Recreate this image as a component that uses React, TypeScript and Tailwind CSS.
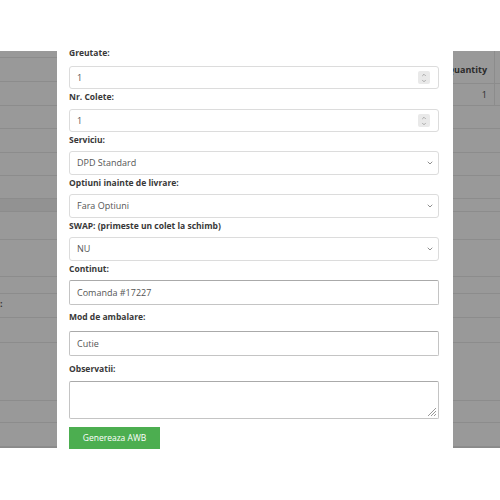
import { ChevronDown, ChevronUp } from 'lucide-react'

const leftRows = [7, 24, 24, 23, 24, 23, 23, 13, 28, 37, 17, 24, 25, 58, 22, 24]
const rightRows = [33, 22, 23, 24, 23, 23, 13, 28, 37, 17, 24, 25, 58, 22, 24]

function Label({ text, className = '' }: { text: string; className?: string }) {
  return (
    <div className={`h-[16px] text-[8.5px] leading-[16px] font-bold text-[#383838] ${className}`}>
      {text}
    </div>
  )
}

function NumberInput({ value, className = '' }: { value: string; className?: string }) {
  return (
    <div
      className={`h-[23px] flex items-center justify-between pl-[7px] pr-[8px] bg-white border border-[#dcdcdc] rounded-[3px] text-[9px] text-[#555] ${className}`}
    >
      <span>{value}</span>
      <span className="w-[12px] h-[13px] bg-[#e9e9e9] rounded-[2px] flex flex-col items-center justify-center text-[#777]">
        <ChevronUp size={6} strokeWidth={2.2} />
        <ChevronDown size={6} strokeWidth={2.2} />
      </span>
    </div>
  )
}

function SelectBox({ value, className = '' }: { value: string; className?: string }) {
  return (
    <div
      className={`h-[24px] flex items-center justify-between pl-[7px] pr-[4px] bg-white border border-[#dcdcdc] rounded-[3px] text-[9px] text-[#555] ${className}`}
    >
      <span>{value}</span>
      <ChevronDown size={8} strokeWidth={2} className="text-[#555]" />
    </div>
  )
}

function TextInput({ value, className = '' }: { value: string; className?: string }) {
  return (
    <div
      className={`h-[25px] flex items-center pl-[7px] bg-white border border-[#c4c4c4] border-t-[#aaa] rounded-[2px] text-[9px] text-[#555] ${className}`}
    >
      {value}
    </div>
  )
}

export default function App() {
  return (
    <div
      className="relative w-[500px] h-[500px] bg-white overflow-hidden"
      style={{ fontFamily: '"Open Sans", "Liberation Sans", sans-serif' }}
    >
      <div className="h-[51px]" />
      {/* dimmed table behind the modal */}
      <div className="h-[397px] bg-[#999] flex border-b border-[#8a8a8a]">
        <div className="w-[57px] flex flex-col">
          {leftRows.map((h, i) => (
            <div
              key={i}
              className={`border-b border-[#8c8c8c] text-[9px] text-[#333] ${i === 7 ? 'bg-[#929292]' : ''}`}
              style={{ height: h }}
            >
              {i === 11 && <span className="block mt-[3px] font-bold leading-[14px]">:</span>}
            </div>
          ))}
        </div>
        <div className="flex-1" />
        <div className="w-[47px] flex flex-col">
          {rightRows.map((h, i) => (
            <div key={i} className="border-b border-[#8c8c8c] flex" style={{ height: h }}>
              <div
                className={`w-[42px] flex items-center justify-end pr-[7px] text-[9px] text-[#2b2b2b] ${i < 2 ? 'border-r border-[#8c8c8c]' : ''} ${i === 0 ? 'font-bold pt-[6px]' : ''}`}
              >
                {i === 0 ? 'Quantity' : i === 1 ? '1' : ''}
              </div>
            </div>
          ))}
        </div>
      </div>

      {/* modal */}
      <div className="absolute left-[57px] top-0 w-[396px] h-[449px] bg-white pt-[45px] pl-[12px] pr-[14px] overflow-hidden">
        <Label text="Greutate:" className="mb-[5px]" />
        <NumberInput value="1" />
        <Label text="Nr. Colete:" className="mb-[4px]" />
        <NumberInput value="1" />
        <Label text="Serviciu:" className="mb-[3px]" />
        <SelectBox value="DPD Standard" />
        <Label text="Optiuni inainte de livrare:" className="mb-[3px]" />
        <SelectBox value="Fara Optiuni" />
        <Label text="SWAP: (primeste un colet la schimb)" className="mb-[3px]" />
        <SelectBox value="NU" />
        <Label text="Continut:" className="mb-[3px]" />
        <TextInput value="Comanda #17227" />
        <Label text="Mod de ambalare:" className="mt-[4px] mb-[6px]" />
        <TextInput value="Cutie" />
        <Label text="Observatii:" className="mt-[5px] mb-[4px]" />
        <div className="relative h-[38px] bg-white border border-[#c4c4c4] border-t-[#aaa] rounded-[2px]">
          <svg
            className="absolute right-[1px] bottom-[1px]"
            width="10"
            height="10"
            viewBox="0 0 10 10"
          >
            <path d="M9 1 L1 9 M9 4 L4 9 M9 7 L7 9" stroke="#999" strokeWidth="1" />
          </svg>
        </div>
        <button className="mt-[8px] w-[91px] h-[22px] bg-[#4cae50] text-white text-[8.5px] flex items-center justify-center">
          Genereaza AWB
        </button>
      </div>
    </div>
  )
}
